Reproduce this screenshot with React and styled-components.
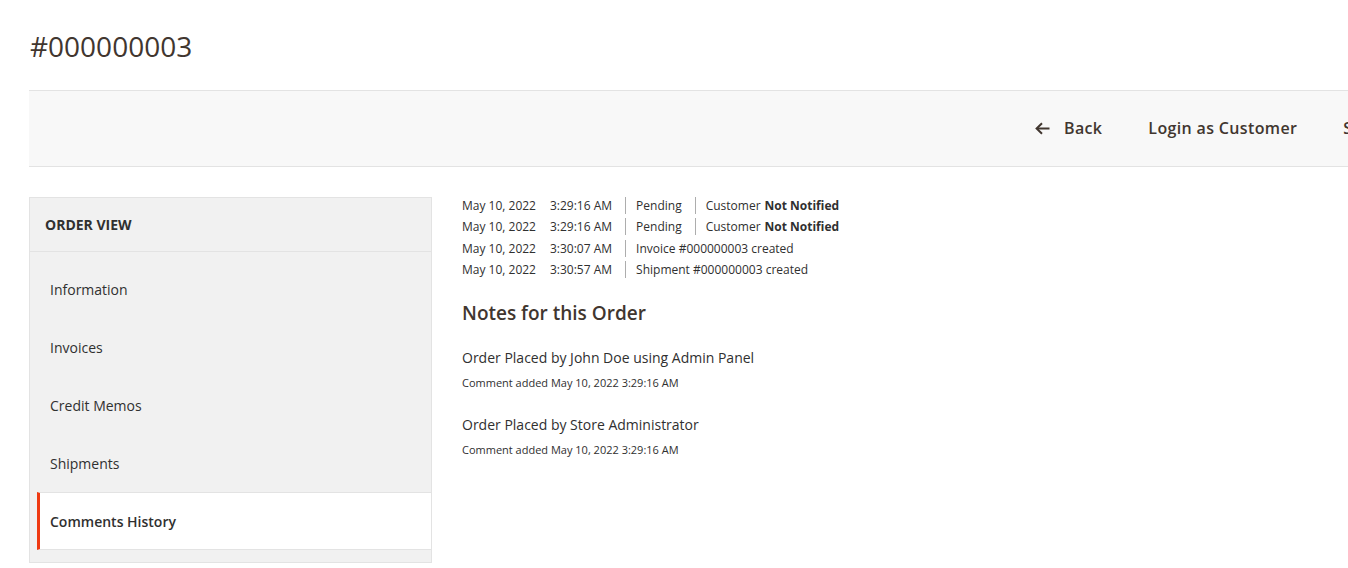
import React from 'react'
import styled, { createGlobalStyle } from 'styled-components'

const GlobalStyle = createGlobalStyle`
  html, body {
    margin: 0;
    padding: 0;
    background: #fff;
    overflow: hidden;
  }
  body {
    font-family: "Open Sans", "Noto Sans", sans-serif;
    color: #303030;
  }
`

const Page = styled.div`
  padding: 0 0 0 29px;
  width: 1319px;
`

const Title = styled.h1`
  margin: 0;
  padding: 29px 0 27px 1px;
  font-size: 28px;
  line-height: 34px;
  font-weight: 400;
  color: #41362f;
`

const Toolbar = styled.div`
  display: flex;
  align-items: center;
  height: 74px;
  padding-bottom: 1px;
  background: #f8f8f8;
  border-top: 1px solid #e3e3e3;
  border-bottom: 1px solid #e3e3e3;
  padding-left: 983px;
  white-space: nowrap;
  overflow: hidden;
`

const ActionButton = styled.button`
  display: inline-flex;
  align-items: center;
  gap: 14px;
  flex-shrink: 0;
  background: transparent;
  border: 0;
  padding: 0 23px;
  font-family: inherit;
  font-size: 16px;
  letter-spacing: 0.35px;
  font-weight: 600;
  color: #41362f;
  cursor: pointer;
  svg { display: block; }
`

const Main = styled.div`
  display: flex;
  align-items: flex-start;
  gap: 30px;
  padding-top: 30px;
`

const Sidebar = styled.nav`
  width: 401px;
  flex-shrink: 0;
  background: #f1f1f1;
  border: 1px solid #e3e3e3;
  padding-bottom: 12px;
`

const SidebarTitle = styled.div`
  height: 53px;
  display: flex;
  align-items: center;
  padding: 0 15px;
  font-size: 14px;
  font-weight: 700;
  color: #303030;
  border-bottom: 1px solid #e3e3e3;
`

const NavList = styled.ul`
  list-style: none;
  margin: 0;
  padding: 8px 0 0 7px;
`

const NavItem = styled.li`
  height: 56px;
  display: flex;
  align-items: center;
  padding: 1px 0 0 10px;
  box-sizing: border-box;
  height: 58px;
  font-size: 14px;
  font-weight: ${(p) => (p.$active ? 600 : 400)};
  color: #303030;
  background: ${(p) => (p.$active ? '#fff' : 'transparent')};
  border-left: 3px solid ${(p) => (p.$active ? '#ef3a12' : 'transparent')};
  border-top: 1px solid ${(p) => (p.$active ? '#e3e3e3' : 'transparent')};
  border-bottom: 1px solid ${(p) => (p.$active ? '#e3e3e3' : 'transparent')};
`

const Content = styled.div`
  flex: 1;
  margin-top: -2px;
`

const History = styled.ul`
  list-style: none;
  margin: 0;
  padding: 0;
  font-size: 12px;
  line-height: 21px;
`

const HistoryRow = styled.li`
  display: flex;
  align-items: center;
  height: 21.3px;
`

const Cell = styled.span`
  display: inline-flex;
  align-items: center;
  height: 17px;
  padding: ${(p) => (p.$first ? '0 14px 0 0' : p.$sep ? '0 13px 0 10px' : '0 13px 0 0')};
  border-left: ${(p) => (p.$sep ? '1px solid #adadad' : '0')};
  strong { font-weight: 700; margin-left: 4px; }
`

const NotesTitle = styled.h2`
  margin: 21px 0 0;
  font-size: 19px;
  line-height: 24px;
  font-weight: 600;
  color: #41362f;
`

const Note = styled.div`
  margin-top: ${(p) => (p.$first ? '23px' : '24px')};
`

const NoteText = styled.div`
  font-size: 14px;
  line-height: 20px;
  color: #303030;
`

const NoteMeta = styled.div`
  margin-top: 7px;
  font-size: 11px;
  line-height: 16px;
  color: #303030;
`

const BackArrow = () => (
  <svg width="15" height="13" viewBox="0 0 15 13" fill="none" stroke="#41362f" strokeWidth="2">
    <path d="M14.5 6.5H2" />
    <path d="M7 1.2L1.6 6.5L7 11.8" />
  </svg>
)

const history = [
  { date: 'May 10, 2022', time: '3:29:16 AM', status: 'Pending', notified: true },
  { date: 'May 10, 2022', time: '3:29:16 AM', status: 'Pending', notified: true },
  { date: 'May 10, 2022', time: '3:30:07 AM', text: 'Invoice #000000003 created' },
  { date: 'May 10, 2022', time: '3:30:57 AM', text: 'Shipment #000000003 created' },
]

const notes = [
  { text: 'Order Placed by John Doe using Admin Panel', date: 'May 10, 2022 3:29:16 AM' },
  { text: 'Order Placed by Store Administrator', date: 'May 10, 2022 3:29:16 AM' },
]

const tabs = ['Information', 'Invoices', 'Credit Memos', 'Shipments', 'Comments History']

const App = () => {
  return (
    <>
      <GlobalStyle />
      <Page>
        <Title>#000000003</Title>
        <Toolbar>
          <ActionButton>
            <BackArrow />
            Back
          </ActionButton>
          <ActionButton>Login as Customer</ActionButton>
          <ActionButton>Send Email</ActionButton>
          <ActionButton>Hold</ActionButton>
        </Toolbar>
        <Main>
          <Sidebar>
            <SidebarTitle>ORDER VIEW</SidebarTitle>
            <NavList>
              {tabs.map((t) => (
                <NavItem key={t} $active={t === 'Comments History'}>{t}</NavItem>
              ))}
            </NavList>
          </Sidebar>
          <Content>
            <History>
              {history.map((h, i) => (
                <HistoryRow key={i}>
                  <Cell $first>{h.date}</Cell>
                  <Cell>{h.time}</Cell>
                  {h.status ? (
                    <>
                      <Cell $sep>{h.status}</Cell>
                      <Cell $sep>Customer<strong>Not Notified</strong></Cell>
                    </>
                  ) : (
                    <Cell $sep>{h.text}</Cell>
                  )}
                </HistoryRow>
              ))}
            </History>
            <NotesTitle>Notes for this Order</NotesTitle>
            {notes.map((n, i) => (
              <Note key={i} $first={i === 0}>
                <NoteText>{n.text}</NoteText>
                <NoteMeta>Comment added {n.date}</NoteMeta>
              </Note>
            ))}
          </Content>
        </Main>
      </Page>
    </>
  )
}

export default App
